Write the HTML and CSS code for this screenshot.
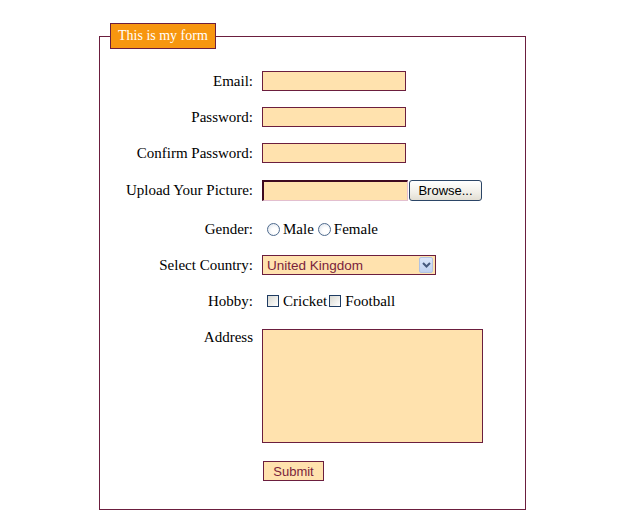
FILE: index.html
```html
<!DOCTYPE html>
<html>
<head>
<meta charset="utf-8">
<link rel="stylesheet" href="styles.css">
</head>
<body>
<form class="form">
  <fieldset class="box">
    <legend class="box-title">This is my form</legend>
    <div class="rows">
      <div class="row">
        <label class="lbl">Email:</label>
        <div class="ctl"><input class="text" type="text"></div>
      </div>
      <div class="row">
        <label class="lbl">Password:</label>
        <div class="ctl"><input class="text" type="password"></div>
      </div>
      <div class="row">
        <label class="lbl">Confirm Password:</label>
        <div class="ctl"><input class="text" type="password"></div>
      </div>
      <div class="row row-upload">
        <label class="lbl">Upload Your Picture:</label>
        <div class="ctl file">
          <input class="file-path" type="text" readonly>
          <button class="browse" type="button">Browse...</button>
        </div>
      </div>
      <div class="row row-gap2">
        <label class="lbl">Gender:</label>
        <div class="ctl choices">
          <input class="radio" type="radio" name="g"><span class="opt">Male</span>
          <input class="radio" type="radio" name="g"><span class="opt">Female</span>
        </div>
      </div>
      <div class="row">
        <label class="lbl">Select Country:</label>
        <div class="ctl">
          <span class="select-wrap">
            <select class="select"><option>United Kingdom</option></select>
            <span class="select-arrow"><svg width="9" height="6" viewBox="0 0 9 6"><path d="M1 1 L4.5 4.5 L8 1" fill="none" stroke="#46597d" stroke-width="2"/></svg></span>
          </span>
        </div>
      </div>
      <div class="row">
        <label class="lbl">Hobby:</label>
        <div class="ctl choices">
          <input class="check" type="checkbox"><span class="opt">Cricket</span>
          <input class="check" type="checkbox"><span class="opt">Football</span>
        </div>
      </div>
      <div class="row row-top row-gap2">
        <label class="lbl">Address</label>
        <div class="ctl"><textarea class="area"></textarea></div>
      </div>
      <div class="row row-gap2">
        <span class="lbl"></span>
        <div class="ctl"><button class="submit" type="submit">Submit</button></div>
      </div>
    </div>
  </fieldset>
</form>
</body>
</html>
```

FILE: styles.css
```css
html, body {
  margin: 0;
  padding: 0;
  background: #ffffff;
}

body {
  font-family: "Liberation Serif", "Times New Roman", serif;
  font-size: 15px;
  color: #000;
}

.form {
  margin: 0;
  padding: 23px 0 0 99px;
}

.box {
  box-sizing: border-box;
  width: 427px;
  margin: 0;
  padding: 22px 10px 28px 10px;
  border: 1px solid #6b1e3e;
  min-width: 0;
}

.box-title {
  background: #f7960f;
  color: #fff;
  border: 1px solid #6b1e3e;
  font-family: "Liberation Serif", serif;
  font-size: 14px;
  line-height: 16px;
  padding: 4px 7px;
}

.rows {
  display: flex;
  flex-direction: column;
  gap: 16px;
}

.row {
  display: grid;
  grid-template-columns: 143px 1fr;
  column-gap: 9px;
  align-items: center;
  min-height: 20px;
}

.row-upload { margin-top: 1px; }
.row-gap2 { margin-top: 2px; }
.row-top { align-items: start; }

.lbl {
  text-align: right;
  line-height: 17px;
  white-space: nowrap;
}

.ctl {
  display: flex;
  align-items: center;
}

.text {
  box-sizing: border-box;
  width: 144px;
  height: 20px;
  margin: 0;
  padding: 0 3px;
  border: 1px solid #6b1e3e;
  background: #ffe2ae;
  font-family: "Liberation Sans", Arial, sans-serif;
  font-size: 13px;
  color: #7a1e3c;
}

.file { gap: 1px; }

.file-path {
  box-sizing: border-box;
  width: 146px;
  height: 21px;
  margin: 0;
  padding: 0 3px;
  border-top: 2px solid #3f0a20;
  border-left: 2px solid #3f0a20;
  border-right: 1px solid #e3bfcf;
  border-bottom: 1px solid #e3bfcf;
  background: #ffe2ae;
}

.browse {
  box-sizing: border-box;
  width: 73px;
  height: 21px;
  margin: 0;
  padding: 0;
  border: 1px solid #2b4566;
  border-radius: 3px;
  background: linear-gradient(#ffffff, #f1efe8 60%, #e2ded3);
  font-family: "Liberation Sans", Arial, sans-serif;
  font-size: 13px;
  color: #000;
}

.choices { gap: 0; }

.radio {
  appearance: none;
  -webkit-appearance: none;
  box-sizing: border-box;
  width: 13px;
  height: 13px;
  margin: 0 3px 0 5px;
  border: 1px solid #4f6b8e;
  border-radius: 50%;
  background: radial-gradient(circle at 60% 60%, #ffffff 30%, #d8dfe8 100%);
}

.radio + .opt + .radio { margin-left: 4px; }

.check {
  appearance: none;
  -webkit-appearance: none;
  box-sizing: border-box;
  width: 12px;
  height: 12px;
  margin: 0 4px 0 5px;
  border: 1px solid #1f3c63;
  background: linear-gradient(135deg, #d9d9d2, #ffffff);
}

.check + .opt + .check { margin-left: 2px; }

.opt {
  line-height: 17px;
}

.select-wrap {
  position: relative;
  display: inline-block;
  width: 174px;
  height: 20px;
}

.select {
  appearance: none;
  -webkit-appearance: none;
  box-sizing: border-box;
  width: 174px;
  height: 20px;
  margin: 0;
  padding: 0 0 0 4px;
  border: 1px solid #6b1e3e;
  border-radius: 0;
  background: #ffe2ae;
  font-family: "Liberation Sans", Arial, sans-serif;
  font-size: 13.5px;
  color: #7a1e3c;
}

.select-arrow {
  position: absolute;
  top: 2px;
  right: 3px;
  box-sizing: border-box;
  width: 14px;
  height: 16px;
  border: 1px solid #b0c3e4;
  border-radius: 2px;
  background: linear-gradient(#dbe6fa, #c0d1f0);
  display: flex;
  align-items: center;
  justify-content: center;
  pointer-events: none;
}

.area {
  box-sizing: border-box;
  width: 221px;
  height: 114px;
  margin: 0;
  padding: 2px;
  border: 1px solid #6b1e3e;
  background: #ffe2ae;
  resize: none;
  display: block;
}

.submit {
  box-sizing: border-box;
  width: 61px;
  height: 20px;
  margin: 0 0 0 1px;
  padding: 0;
  border: 1px solid #6b1e3e;
  border-radius: 0;
  background: #ffe2ae;
  font-family: "Liberation Sans", Arial, sans-serif;
  font-size: 13px;
  color: #7a1e3c;
}
```
